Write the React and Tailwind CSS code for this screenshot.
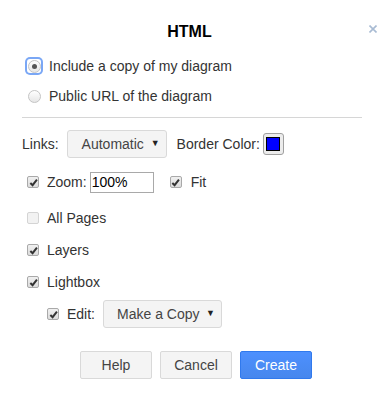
import { useState } from "react"

function Radio({ checked, focused }) {
  return (
    <span
      className={
        "flex items-center justify-center w-[14px] h-[14px] rounded-[3px] shrink-0 " +
        (focused ? "ring-2 ring-[#7aa7f5]" : "")
      }
    >
      <span className="flex items-center justify-center w-[13px] h-[13px] rounded-full border border-[#c4c4c4] bg-gradient-to-b from-[#ffffff] to-[#e6e6e6]">
        {checked && <span className="w-[5px] h-[5px] rounded-full bg-[#555]" />}
      </span>
    </span>
  )
}

function Check({ checked, disabled }) {
  return (
    <span
      className={
        "flex items-center justify-center w-[12px] h-[12px] rounded-[2px] border shrink-0 " +
        (disabled
          ? "border-[#d4d4d4] bg-[#f2f2f2]"
          : "border-[#a9a9a9] bg-gradient-to-b from-[#f0f0f0] to-[#dcdcdc]")
      }
    >
      {checked && (
        <svg width="9" height="9" viewBox="0 0 10 10">
          <path d="M1.5 5.5 L4 8 L8.8 1.8" fill="none" stroke="#333" strokeWidth="2.2" />
        </svg>
      )}
    </span>
  )
}

function Select({ value, className }) {
  return (
    <div
      className={
        "flex items-center justify-between h-[28px] rounded-[3px] border border-[#d9d9d9] bg-[#f4f4f4] text-[#444] " +
        className
      }
    >
      <span>{value}</span>
      <span className="text-[9px] text-[#222]">▼</span>
    </div>
  )
}

export default function App() {
  const [zoom, setZoom] = useState("100%")

  return (
    <div
      className="relative w-[379px] h-[415px] bg-white text-[14px] text-[#333] px-[22px]"
      style={{ fontFamily: '"Liberation Sans", Arial, sans-serif' }}
    >
      <button className="absolute right-[2px] top-[7px] w-[8px] h-[8px]">
        <svg width="8" height="8" viewBox="0 0 8 8">
          <path d="M0.5 0.5 L7.5 7.5 M7.5 0.5 L0.5 7.5" stroke="#a8bbd3" strokeWidth="1.6" />
        </svg>
      </button>

      <div className="h-[28px] mt-[18px] flex items-center justify-center text-[16px] font-bold text-[#000]">
        HTML
      </div>

      <div className="h-[30px] mt-[5px] flex items-center pl-[5px] gap-[8px]">
        <Radio checked focused />
        <span>Include a copy of my diagram</span>
      </div>
      <div className="h-[30px] flex items-center pl-[5px] gap-[8px]">
        <Radio />
        <span>Public URL of the diagram</span>
      </div>

      <div className="mt-[6px] -mr-[5px] border-t border-[#d6d6d6]" />

      <div className="h-[30px] mt-[11px] flex items-center">
        <span>Links:</span>
        <Select value="Automatic" className="ml-[8px] w-[100px] pl-[14px] pr-[6px]" />
        <span className="ml-[10px]">Border Color:</span>
        <div className="ml-[3px] flex items-center justify-center w-[21px] h-[22px] rounded-[3px] border border-[#a0a0a0] bg-[#ececec]">
          <span className="w-[14px] h-[14px] bg-[#0000ff] border border-[#000]" />
        </div>
      </div>

      <div className="h-[30px] mt-[8px] flex items-center pl-[5px]">
        <Check checked />
        <span className="ml-[8px]">Zoom:</span>
        <input
          value={zoom}
          onChange={(e) => setZoom(e.target.value)}
          className="ml-[3px] w-[64px] h-[21px] border border-[#a9a9a9] px-[1px] text-[14px] text-[#000] outline-none"
        />
        <span className="ml-[16px]"><Check checked /></span>
        <span className="ml-[9px]">Fit</span>
      </div>

      <div className="h-[30px] mt-[6px] flex items-center pl-[5px]">
        <Check disabled />
        <span className="ml-[8px]">All Pages</span>
      </div>
      <div className="h-[30px] mt-[2px] flex items-center pl-[5px]">
        <Check checked />
        <span className="ml-[8px]">Layers</span>
      </div>
      <div className="h-[30px] mt-[2px] flex items-center pl-[5px]">
        <Check checked />
        <span className="ml-[8px]">Lightbox</span>
      </div>
      <div className="h-[30px] mt-[2px] flex items-center pl-[25px]">
        <Check checked />
        <span className="ml-[8px]">Edit:</span>
        <Select value="Make a Copy" className="ml-[8px] w-[119px] pl-[13px] pr-[6px]" />
      </div>

      <div className="mt-[22px] flex justify-center gap-[8px] pl-[13px]">
        <button className="w-[72px] h-[28px] rounded-[2px] border border-[#d9d9d9] bg-[#f4f4f4] text-[#444]">
          Help
        </button>
        <button className="w-[72px] h-[28px] rounded-[2px] border border-[#d9d9d9] bg-[#f4f4f4] text-[#444]">
          Cancel
        </button>
        <button className="w-[72px] h-[28px] rounded-[2px] border border-[#3079ed] bg-gradient-to-b from-[#4d90fe] to-[#4787ed] text-white">
          Create
        </button>
      </div>
    </div>
  )
}
